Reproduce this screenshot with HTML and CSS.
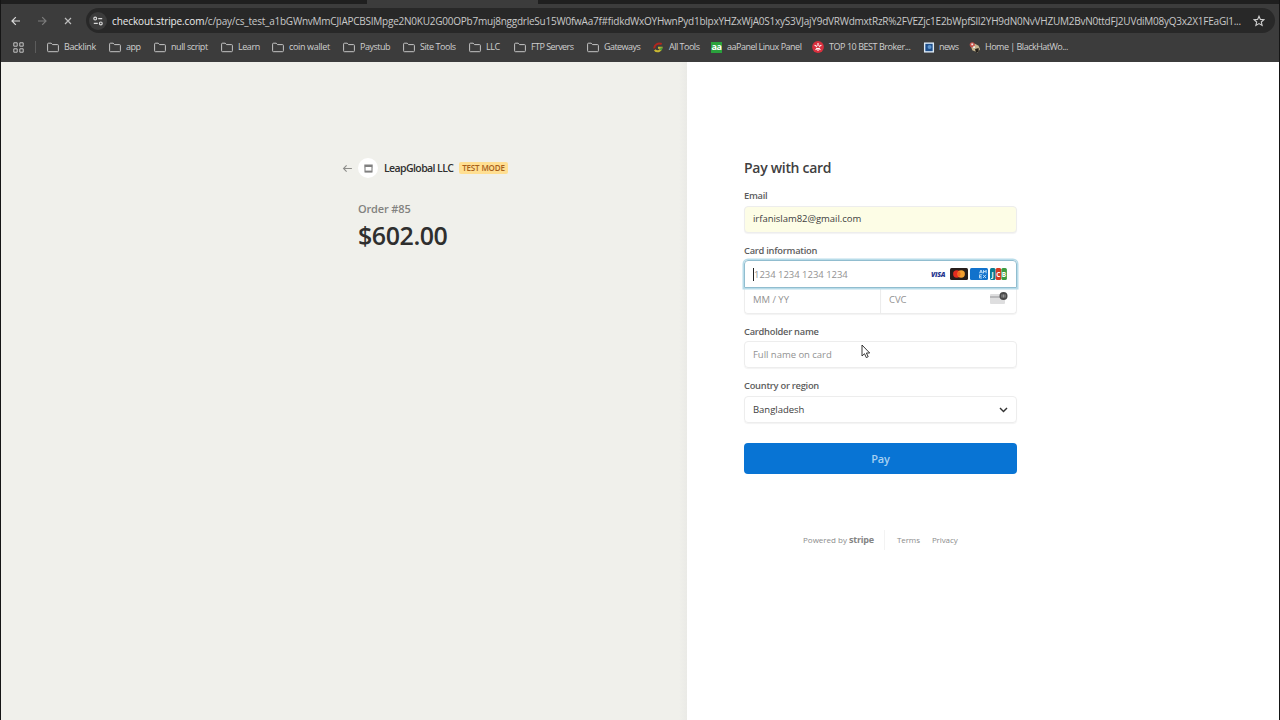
FILE: index.html
```
<!DOCTYPE html>
<html lang="en">
<head>
    <meta charset="UTF-8">
    <meta name="viewport" content="width=device-width, initial-scale=1.0">
    <title>LeapGlobal LLC - Checkout</title>
    <link rel="stylesheet" href="styles.css">
</head>
<body>

    <!-- Shared icon shapes -->
    <svg class="icon-defs" aria-hidden="true">
        <symbol id="folder" viewBox="0 0 12 10">
            <path d="M.6 1.6q0-.9.9-.9h2.7l1.3 1.4h5q.9 0 .9.9v5.3q0 .9-.9.9h-9q-.9 0-.9-.9z" fill="none" stroke="#c4c4c4" stroke-width="1"/>
        </symbol>
    </svg>

    <div class="browser">
        <!-- Tab strip -->
        <div class="tab-strip"><div class="active-tab"></div></div>

        <!-- Address bar -->
        <div class="toolbar">
            <svg class="nav-icon" viewBox="0 0 10 10"><path d="M9 5H1.2M4.8 1.2L1 5l3.8 3.8" stroke="#dcdcdc"/></svg>
            <svg class="nav-icon" viewBox="0 0 10 10"><path d="M1 5h7.8M5.2 1.2L9 5 5.2 8.8" stroke="#7c7c7c"/></svg>
            <svg class="nav-icon stop" viewBox="0 0 10 10"><path d="M2 2l6 6M8 2L2 8" stroke="#bdbdbd"/></svg>
            <div class="address">
                <span class="site-info">
                    <svg width="10" height="10" viewBox="0 0 10 10" fill="none" stroke="#d8d8d8" stroke-width="1.2"><circle cx="2.2" cy="2.6" r="1.4"/><path d="M5.2 2.6h4M.8 7.4h4"/><circle cx="7.8" cy="7.4" r="1.4"/></svg>
                </span>
                <span class="url"><span class="host">checkout.stripe.com</span>/c/pay/cs_test_a1bGWnvMmCJIAPCBSIMpge2N0KU2G00OPb7muj8nggdrleSu15W0fwAa7f#fidkdWxOYHwnPyd1blpxYHZxWjA0S1xyS3VJajY9dVRWdmxtRzR%2FVEZjc1E2bWpfSlI2YH9dN0NvVHZUM2BvN0ttdFJ2UVdiM08yQ3x2X1FEaGl1...</span>
                <svg class="star" viewBox="0 0 12 12"><path d="M6 1.2l1.4 3.2 3.5.3-2.6 2.3.8 3.4L6 8.6l-3.1 1.8.8-3.4L1.1 4.7l3.5-.3z" fill="none" stroke="#d0d0d0" stroke-width="1.1"/></svg>
            </div>
        </div>

        <!-- Bookmarks -->
        <div class="bookmarks">
            <svg class="apps" viewBox="0 0 11 11" fill="none" stroke="#c4c4c4"><path d="M.8.8h3.4v3.4H.8zM6.8.8h3.4v3.4H6.8zM.8 6.8h3.4v3.4H.8zM6.8 6.8h3.4v3.4H6.8z"/></svg>
            <span class="divider"></span>
            <a class="bookmark b-backlink"><svg><use href="#folder"/></svg>Backlink</a>
            <a class="bookmark b-app"><svg><use href="#folder"/></svg>app</a>
            <a class="bookmark b-null"><svg><use href="#folder"/></svg>null script</a>
            <a class="bookmark b-learn"><svg><use href="#folder"/></svg>Learn</a>
            <a class="bookmark b-coin"><svg><use href="#folder"/></svg>coin wallet</a>
            <a class="bookmark b-paystub"><svg><use href="#folder"/></svg>Paystub</a>
            <a class="bookmark b-site"><svg><use href="#folder"/></svg>Site Tools</a>
            <a class="bookmark b-llc"><svg><use href="#folder"/></svg>LLC</a>
            <a class="bookmark b-ftp"><svg><use href="#folder"/></svg>FTP Servers</a>
            <a class="bookmark b-gateways"><svg><use href="#folder"/></svg>Gateways</a>
            <a class="bookmark b-tools"><svg viewBox="0 0 12 12" fill="none" stroke-width="2.2"><path d="M10 2.2C6 .5 1.8 3 2 7" stroke="#b3261e"/><path d="M2.5 8.5c2 2.8 6.5 2 7.3-2.3H6" stroke="#c9b832"/><path d="M8.8 8.8c.7-.8 1-1.6 1-2.8" stroke="#4c9a3c"/></svg>All Tools</a>
            <a class="bookmark b-panel"><span class="aa">aa</span>aaPanel Linux Panel</a>
            <a class="bookmark b-top"><svg viewBox="0 0 12 12"><circle cx="6" cy="6" r="5.9" fill="#d9303e"/><path d="M6 2v3M6 7v3M2.6 4.2l2.5 1.3M9.4 4.2L6.9 5.5M3.6 9l1.7-2.2M8.4 9L6.7 6.8" stroke="#fff" stroke-width="1.1"/></svg>TOP 10 BEST Broker...</a>
            <a class="bookmark b-news"><svg viewBox="0 0 12 12"><path d="M.5.5h11v11H.5z" fill="#dce9f5"/><path d="M2 2h8v8H2z" fill="#1e4f8c"/><circle cx="6.6" cy="5.4" r="2.2" fill="#5d93ca"/></svg>news</a>
            <a class="bookmark b-home"><svg viewBox="0 0 12 12"><path d="M1 3l5-1 4 2 1.5 4L9 11.5 3 9z" fill="#c5b58f"/><circle cx="3" cy="3" r="2.8" fill="#c65048"/><path d="M2 1.5h2v2H2zM4 4.5h2v2H4z" fill="#eee"/><path d="M6 7.5l4-1v4l-3 1z" fill="#25211c"/></svg>Home | BlackHatWo...</a>
        </div>
    </div>

    <main class="checkout">
        <!-- Order summary -->
        <section class="summary">
            <div class="merchant">
                <svg class="back" viewBox="0 0 10 10"><path d="M9 5H1.5M4.2 2.2L1.4 5l2.8 2.8" fill="none" stroke="#8d8d8a"/></svg>
                <span class="avatar"><svg width="9" height="9" viewBox="0 0 9 9"><path d="M.3.5h8.4v2.8H.3z" fill="#808080"/><path d="M1 3v5h7V3" fill="#fff" stroke="#808080" stroke-width="1.1"/><path d="M1 7.4h7" stroke="#808080" stroke-width="1.6"/></svg></span>
                <span class="merchant-name">LeapGlobal LLC</span>
                <span class="test-mode">TEST MODE</span>
            </div>
            <p class="order">Order #85</p>
            <p class="total">$602.00</p>
        </section>

        <!-- Payment form -->
        <section class="payment">
            <form class="form">
                <h1>Pay with card</h1>

                <div class="label">Email</div>
                <div class="field email">irfanislam82@gmail.com</div>

                <div class="label">Card information</div>
                <div class="card-group">
                    <div class="field card-number">
                        <span class="caret"></span><span class="placeholder">1234 1234 1234 1234</span>
                        <span class="brands">
                            <span class="visa">VISA</span>
                            <svg viewBox="0 0 18 12"><rect width="18" height="12" rx="1.5" fill="#261d1b"/><circle cx="6.8" cy="6" r="3.7" fill="#e42c20"/><circle cx="11.2" cy="6" r="3.7" fill="#f2a030"/><path d="M9 3a3.7 3.7 0 0 1 0 6 3.7 3.7 0 0 1 0-6" fill="#f3661f"/></svg>
                            <svg viewBox="0 0 18 12"><rect width="18" height="12" rx="1.5" fill="#1272cc"/><path d="M9.5 5.3L11 2l1.5 3.3M10.2 4.3h1.6M13.5 5.3V2.3l1.3 1.8 1.3-1.8v3M12 6.8H9.5V10H12M9.5 8.4h2M13 6.8l3 3.2M16 6.8L13 10" fill="none" stroke="#c9e5fb" stroke-width=".9"/></svg>
                            <svg class="jcb" viewBox="0 0 17 12"><rect width="5.5" height="12" rx="1.5" fill="#087b91"/><rect x="5.7" width="5.5" height="12" rx="1.5" fill="#d33b22"/><rect x="11.4" width="5.5" height="12" rx="1.5" fill="#3c9c40"/><text x="1.5" y="8.6">J</text><text x="6.2" y="8.6">C</text><text x="11.8" y="8.6">B</text></svg>
                        </span>
                    </div>
                    <div class="card-row">
                        <div class="field placeholder">MM / YY</div>
                        <div class="field cvc placeholder">CVC
                            <svg viewBox="0 0 18 12"><rect y="2" width="15" height="10" rx="1" fill="#dededf"/><path d="M0 4h11v2H0z" fill="#b9b9bb"/><circle cx="13.5" cy="4" r="4" fill="#484848"/><path d="M12 2.4v3.2M13.5 2.4v3.2M15 2.4v3.2" stroke="#bbb" stroke-width=".7"/></svg>
                        </div>
                    </div>
                </div>

                <div class="label">Cardholder name</div>
                <div class="field name placeholder">Full name on card</div>

                <div class="label">Country or region</div>
                <div class="field country">Bangladesh
                    <svg viewBox="0 0 9 6"><path d="M1 1l3.5 3.6L8 1" fill="none" stroke="#333" stroke-width="1.4"/></svg>
                </div>

                <button type="button" class="pay">Pay</button>
            </form>
            <footer class="footer">
                <span class="powered">Powered by <b>stripe</b></span>
                <a>Terms</a>
                <a>Privacy</a>
            </footer>
        </section>
    </main>

    <svg class="cursor" viewBox="0 0 10 15"><path d="M1 1v11l2.5-2.3 1.8 3.9 1.9-.9-1.8-3.7h3.3z" fill="#fff" stroke="#222" stroke-width=".9"/></svg>

</body>
</html>
```
FILE: styles.css
```
* {
    box-sizing: border-box;
}

body {
    font-family: "Open Sans", "Noto Sans", sans-serif;
    margin: 0;
    height: 720px;
    overflow: hidden;
    background-color: #fff;
    border-left: 1px solid #151515;
    border-right: 1px solid #151515;
    color: #404040;
}

p, h1 {
    margin: 0;
}

svg {
    flex: none;
}

.icon-defs {
    display: none;
}

/* Browser chrome */
.browser {
    height: 62px;
    background-color: #3c3c3c;
}

.tab-strip {
    height: 4px;
    padding-left: 366px;
    background-color: #1f1f1f;
}

.active-tab {
    width: 171px;
    height: 4px;
    background-color: #3c3c3c;
}

.toolbar {
    display: flex;
    align-items: center;
    height: 33px;
    padding: 0 4px 0 10px;
}

.nav-icon {
    width: 10px;
    height: 10px;
    margin-right: 16px;
    fill: none;
    stroke-width: 1.2;
}

.nav-icon.stop {
    margin-right: 13px;
}

.address {
    flex: 1;
    min-width: 0;
    display: flex;
    align-items: center;
    height: 25px;
    padding: 0 10px 0 3px;
    border-radius: 13px;
    background-color: #282828;
}

.site-info {
    display: flex;
    flex: none;
    align-items: center;
    justify-content: center;
    width: 18px;
    height: 18px;
    margin-right: 5px;
    border-radius: 50%;
    background-color: #3c3c3c;
}

.url {
    flex: 1;
    min-width: 0;
    font-size: 10px;
    letter-spacing: -0.235px;
    white-space: nowrap;
    color: #c9c9c9;
}

.host {
    letter-spacing: -0.1px;
    color: #ececec;
}

.star {
    width: 12px;
    height: 12px;
}

.bookmarks {
    display: flex;
    align-items: center;
    height: 20px;
    padding-left: 12px;
    font-size: 9px;
    color: #cfcfcf;
}

.apps {
    width: 11px;
    height: 11px;
}

.divider {
    width: 1px;
    height: 12px;
    margin: 0 11px;
    background-color: #5c5c5c;
}

.bookmark {
    display: flex;
    align-items: center;
    gap: 5px;
    flex: none;
    line-height: 12px;
    white-space: nowrap;
    letter-spacing: -0.45px;
}

.bookmark svg {
    width: 12px;
    height: 11px;
}

.b-backlink { width: 62px; letter-spacing: -0.35px; }
.b-app { width: 45px; }
.b-null { width: 67px; letter-spacing: -0.4px; }
.b-learn { width: 51px; }
.b-coin { width: 71px; letter-spacing: -0.35px; }
.b-paystub { width: 60px; letter-spacing: -0.5px; }
.b-site { width: 66px; }
.b-llc { width: 45px; }
.b-ftp { width: 73px; letter-spacing: -0.55px; }
.b-gateways { width: 65px; letter-spacing: -0.55px; }
.b-tools { width: 59px; letter-spacing: -0.5px; }
.b-panel { width: 101px; letter-spacing: -0.5px; }
.b-top { width: 111px; }
.b-news { width: 46px; gap: 4px; letter-spacing: -0.6px; }
.b-home { gap: 4px; letter-spacing: -0.5px; }

.bookmark.b-top svg {
    height: 12px;
}

.aa {
    width: 11px;
    height: 11px;
    line-height: 9px;
    text-align: center;
    font-weight: bold;
    background-color: #2aa13c;
    color: #fff;
}

/* Checkout page */
.checkout {
    display: flex;
    height: 658px;
}

.summary {
    width: 686px;
    padding: 96px 0 0 341px;
    background: linear-gradient(to right, #f0f0eb 678px, #eaeae6 686px);
}

.merchant {
    display: flex;
    align-items: center;
    height: 20px;
}

.back {
    width: 11px;
    height: 11px;
}

.avatar {
    display: flex;
    align-items: center;
    justify-content: center;
    width: 20px;
    height: 20px;
    margin: 0 6px 0 5px;
    border-radius: 50%;
    background-color: #fff;
}

.merchant-name {
    width: 75px;
    font-size: 10.5px;
    font-weight: 600;
    letter-spacing: -0.6px;
    white-space: nowrap;
    color: #303030;
}

.test-mode {
    width: 49px;
    height: 12px;
    line-height: 12px;
    border-radius: 2px;
    text-align: center;
    font-size: 8px;
    font-weight: 600;
    letter-spacing: -0.15px;
    white-space: nowrap;
    background-color: #ffdf92;
    color: #a6601c;
}

.order {
    margin: 22px 0 0 16px;
    line-height: 17px;
    font-size: 11px;
    font-weight: 600;
    letter-spacing: -0.15px;
    color: #82827f;
}

.total {
    margin: 2px 0 0 16px;
    line-height: 32px;
    font-size: 25px;
    font-weight: 600;
    letter-spacing: -0.45px;
    color: #2f2f2e;
}

.payment {
    flex: 1;
    padding: 96px 0 0 57px;
}

.form {
    width: 273px;
}

.form h1 {
    height: 20px;
    line-height: 20px;
    margin-bottom: 10px;
    font-size: 14px;
    font-weight: 600;
    letter-spacing: -0.3px;
}

.label {
    height: 16px;
    line-height: 16px;
    font-size: 9.3px;
    font-weight: 600;
    letter-spacing: -0.25px;
    color: #5c5c5c;
}

.field {
    display: flex;
    align-items: center;
    height: 27px;
    padding: 0 8px;
    border: 1px solid #ededed;
    border-radius: 4px;
    box-shadow: 0 1px 1px rgba(0, 0, 0, 0.05);
    font-size: 9.5px;
    letter-spacing: -0.03px;
}

.email {
    margin: 2px 0 10px;
    padding-bottom: 2px;
    background-color: #fdfde6;
}

.placeholder {
    color: #929292;
}

.card-group {
    height: 55px;
    margin: 1px 0 9px;
}

.card-number {
    position: relative;
    height: 28px;
    border-color: #91bdcf;
    border-radius: 4px 4px 0 0;
    box-shadow: 0 0 0 1.5px #b8dce9;
}

.caret {
    width: 1px;
    height: 13px;
    background-color: #222;
}

.brands {
    display: flex;
    align-items: center;
    gap: 2px;
    margin: 0 1px 0 auto;
}

.brands svg {
    width: 18px;
    height: 12px;
}

.brands .jcb {
    width: 17px;
    font-size: 6.5px;
    font-weight: bold;
    fill: #fff;
}

.visa {
    width: 17px;
    font-size: 7px;
    font-style: italic;
    font-weight: 800;
    letter-spacing: -0.3px;
    color: #27358e;
}

.card-row {
    display: flex;
}

.card-row .field {
    flex: 1;
    height: 26px;
    padding-bottom: 2px;
    border-top: 0;
    border-radius: 0 0 0 4px;
}

.card-row .cvc {
    border-left: 0;
    border-radius: 0 0 4px 0;
}

.cvc svg {
    width: 18px;
    height: 12px;
    margin: -4px 0 0 auto;
}

.name {
    margin: 1px 0 10px;
}

.country {
    margin: 2px 0 20px;
}

.country svg {
    width: 9px;
    height: 6px;
    margin-left: auto;
}

.pay {
    display: block;
    width: 100%;
    height: 31px;
    padding: 0;
    border: 0;
    border-radius: 4px;
    font: 600 11px "Open Sans", sans-serif;
    letter-spacing: -0.2px;
    background-color: #0874d4;
    color: #a6d0f2;
}

.footer {
    display: flex;
    align-items: center;
    gap: 12px;
    height: 20px;
    margin: 56px 0 0 59px;
    font-size: 8px;
    line-height: 20px;
    letter-spacing: -0.1px;
    color: #8c8c8c;
}

.powered {
    width: 82px;
    border-right: 1px solid #f3f3f3;
    white-space: nowrap;
    letter-spacing: 0;
}

.powered b {
    font-size: 9px;
    letter-spacing: -0.25px;
    color: #858585;
}

/* Mouse pointer lies over the form */
.cursor {
    position: absolute;
    left: 861px;
    top: 344px;
    width: 10px;
    height: 15px;
}
```
